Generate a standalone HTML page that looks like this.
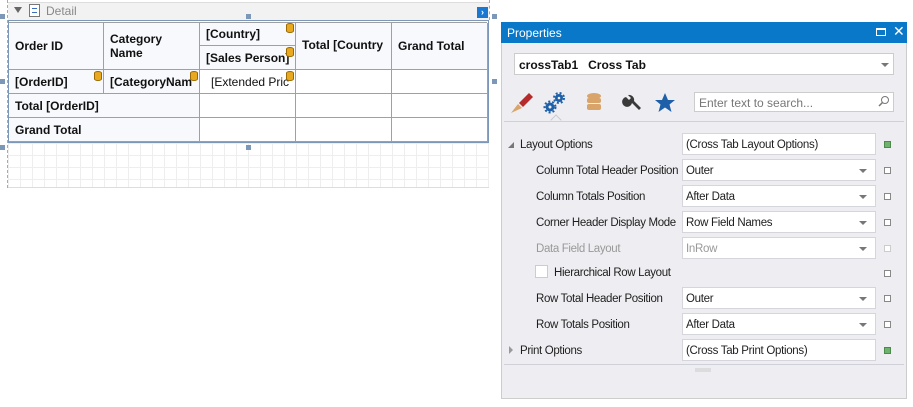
<!DOCTYPE html><html><head><style>
*{box-sizing:border-box;margin:0;padding:0}
body{width:913px;height:407px;background:#fff;font-family:"Liberation Sans",sans-serif;position:relative;overflow:hidden}
.a{position:absolute}
.grid{left:8px;top:143px;width:481px;height:45px;background-image:linear-gradient(#eeeeee 1px,transparent 1px),linear-gradient(90deg,#eeeeee 1px,transparent 1px);background-size:12px 12px;border-bottom:1px solid #ddd}
.c{position:absolute;border-right:1px solid #a0a0a0;border-bottom:1px solid #a0a0a0;font-size:12px;font-weight:bold;color:#111;padding-left:6px;display:flex;align-items:center}
.h{background:#f7f9fc}
.db{position:absolute;width:8px;height:10px;background:#e8a820;border:1px solid #9a6a00;border-radius:4px/2px}
.hd{position:absolute;width:5px;height:5px;background:#7d97b8}
.lbl{position:absolute;left:536px;font-size:11.5px;letter-spacing:-0.35px;color:#1e1e1e;white-space:nowrap;margin-top:2px}
.val{position:absolute;left:682px;width:194px;height:22px;background:#fff;border:1px solid #d5d5dc;font-size:11.5px;letter-spacing:-0.3px;color:#1e1e1e;padding:5px 3px 0}
.dd::after{content:"";position:absolute;right:8px;top:9px;border:4px solid transparent;border-top:4px solid #777;border-bottom:0}
.sq{position:absolute;left:884px;width:7px;height:7px;border:1px solid #888;background:#fff}
.sg{background:#6db36d;border-color:#4b8a4b}
</style></head><body>
<div class="a" style="left:8px;top:2px;width:481px;height:18px;background:#f2f2f2;border-top:1px solid #ddd"></div>
<div class="a" style="left:7px;top:0;width:0;height:188px;border-left:1px dashed #aaa"></div>
<div class="a" style="left:489px;top:0;width:0;height:20px;border-left:1px dashed #aaa"></div>
<div class="a" style="left:14px;top:7px;border:4px solid transparent;border-top:6px solid #666;border-bottom:0"></div>
<div class="a" style="left:29px;top:4px;width:11px;height:13px;border:1px solid #777;background:#fff"><div style="margin:3px 2px;height:5px;border-top:1px solid #3a6fc0;border-bottom:1px solid #3a6fc0"></div></div>
<div class="a" style="left:46px;top:4px;font-size:12px;color:#888">Detail</div>
<div class="a" style="left:477px;top:7px;width:11px;height:11px;background:#1a78d0;color:#fff;font-size:9px;line-height:11px;text-align:center;font-weight:bold">›</div>
<div class="a grid"></div>
<div class="a" style="left:8px;top:20px;width:481px;height:123px;border:1px solid #7d97b8;background:#fff"></div>
<div class="a" style="left:9px;top:22px;width:478px;height:119px;border-left:1px solid #a0a0a0;border-top:1px solid #a0a0a0"></div>
<div class="c h" style="left:9px;top:23px;width:95px;height:47px">Order ID</div>
<div class="c h" style="left:104px;top:23px;width:96px;height:47px">Category<br>Name</div>
<div class="c h" style="left:200px;top:23px;width:96px;height:23px">[Country]</div>
<div class="c h" style="left:200px;top:46px;width:96px;height:24px">[Sales Person]</div>
<div class="c h" style="left:296px;top:23px;width:96px;height:47px;align-items:flex-start;padding-top:15px">Total [Country</div>
<div class="c h" style="left:392px;top:23px;width:96px;height:47px">Grand Total</div>
<div class="c h" style="left:9px;top:70px;width:95px;height:24px">[OrderID]</div>
<div class="c h" style="left:104px;top:70px;width:96px;height:24px;overflow:hidden;white-space:nowrap">[CategoryNam</div>
<div class="c" style="left:200px;top:70px;width:96px;height:24px;font-weight:normal;padding-left:11px;overflow:hidden;white-space:nowrap">[Extended Pric</div>
<div class="c" style="left:296px;top:70px;width:96px;height:24px"></div>
<div class="c" style="left:392px;top:70px;width:96px;height:24px"></div>
<div class="c h" style="left:9px;top:94px;width:191px;height:24px">Total [OrderID]</div>
<div class="c" style="left:200px;top:94px;width:96px;height:24px"></div>
<div class="c" style="left:296px;top:94px;width:96px;height:24px"></div>
<div class="c" style="left:392px;top:94px;width:96px;height:24px"></div>
<div class="c h" style="left:9px;top:118px;width:191px;height:24px">Grand Total</div>
<div class="c" style="left:200px;top:118px;width:96px;height:24px"></div>
<div class="c" style="left:296px;top:118px;width:96px;height:24px"></div>
<div class="c" style="left:392px;top:118px;width:96px;height:24px"></div>
<div class="db" style="left:286px;top:23px"></div>
<div class="db" style="left:286px;top:47px"></div>
<div class="db" style="left:94px;top:71px"></div>
<div class="db" style="left:190px;top:71px"></div>
<div class="db" style="left:286px;top:71px"></div>
<div class="hd" style="left:0;top:14px"></div><div class="hd" style="left:246px;top:14px"></div><div class="hd" style="left:492px;top:14px"></div>
<div class="hd" style="left:0;top:79px"></div><div class="hd" style="left:492px;top:79px"></div>
<div class="hd" style="left:0;top:145px"></div><div class="hd" style="left:246px;top:145px"></div>
<!-- properties panel -->
<div class="a" style="left:501px;top:22px;width:406px;height:377px;background:#eeeef2;border:1px solid #ccc"></div>
<div class="a" style="left:501px;top:22px;width:406px;height:21px;background:#0a78c8;color:#fff;font-size:12px;padding:4px 6px">Properties</div>
<div class="a" style="left:876px;top:28px;width:10px;height:8px;border:1px solid #fff;border-top-width:2px"></div>
<div class="a" style="left:893px;top:23px;color:#fff;font-size:14px">✕</div>
<div class="a" style="left:514px;top:53px;width:380px;height:22px;background:#fff;border:1px solid #ccc;font-size:12px;font-weight:bold;padding:4px 4px;color:#111">crossTab1&nbsp;&nbsp;&nbsp;Cross Tab</div>
<div class="a" style="left:881px;top:63px;border:4px solid transparent;border-top:4px solid #777;border-bottom:0"></div>
<svg class="a" style="left:508px;top:89px" width="180" height="28">
<path d="M3 24 L10 15 L14 19 Z" fill="#d9a46a"/><path d="M11 14 L21 4 L25 8 L15 18 Z" fill="#b52b2b"/>
<g fill="#1d5fa8"><circle cx="42" cy="18" r="4.5"/><circle cx="51" cy="9" r="4"/></g>
<g fill="none" stroke="#1d5fa8" stroke-width="2" stroke-dasharray="2 2"><circle cx="42" cy="18" r="5.5"/><circle cx="51" cy="9" r="5"/></g>
<circle cx="42" cy="18" r="1.5" fill="#eeeef2"/><circle cx="51" cy="9" r="1.3" fill="#eeeef2"/>
<g fill="#d9a46a"><ellipse cx="86" cy="7" rx="7" ry="3"/><rect x="79" y="9" width="14" height="5" rx="2"/><rect x="79" y="15" width="14" height="6" rx="2"/></g>
<path d="M118 8 a5 5 0 1 0 6 6 L131 21 L133 19 L126 12 a5 5 0 0 0-6-6 l3 3-2 2z" fill="#3a3a3a"/>
<path d="M157 4 L160 11 L167 11 L161.5 15.5 L163.5 23 L157 18.5 L150.5 23 L152.5 15.5 L147 11 L154 11 Z" fill="#1d5fa8"/>
</svg>
<div class="a" style="left:552px;top:116px;width:8px;height:8px;background:#eeeef2;border-left:1px solid #c8c8d0;border-top:1px solid #c8c8d0;transform:rotate(45deg)"></div>
<div class="a" style="left:694px;top:92px;width:200px;height:20px;background:#fff;border:1px solid #ccc;font-size:12px;color:#777;padding:3px 4px">Enter text to search...</div>
<svg class="a" style="left:878px;top:95px" width="12" height="12"><circle cx="7" cy="5" r="3.5" fill="none" stroke="#777"/><path d="M4.5 7.5 L1 11" stroke="#777" stroke-width="1.5"/></svg>
<div class="a" style="left:504px;top:121px;width:400px;border-top:1px solid #d0d0d8"></div>
<svg class="a" style="left:508px;top:141px" width="8" height="8"><path d="M6 1 L6 7 L0 7 Z" fill="#777"/></svg>
<div class="lbl" style="left:520px;top:137px">Layout Options</div>
<div class="val" style="top:133px">(Cross Tab Layout Options)</div><div class="sq sg" style="top:141px"></div>
<div class="lbl" style="top:163px">Column Total Header Position</div><div class="val dd" style="top:159px">Outer</div><div class="sq" style="top:167px"></div>
<div class="lbl" style="top:189px">Column Totals Position</div><div class="val dd" style="top:185px">After Data</div><div class="sq" style="top:193px"></div>
<div class="lbl" style="top:215px">Corner Header Display Mode</div><div class="val dd" style="top:211px">Row Field Names</div><div class="sq" style="top:219px"></div>
<div class="lbl" style="top:241px;color:#999">Data Field Layout</div><div class="val dd" style="top:237px;color:#999">InRow</div><div class="sq" style="top:245px;border-color:#ccc"></div>
<div class="a" style="left:535px;top:265px;width:13px;height:13px;background:#fff;border:1px solid #ccc"></div>
<div class="lbl" style="left:554px;top:265px">Hierarchical Row Layout</div><div class="sq" style="top:270px"></div>
<div class="lbl" style="top:291px">Row Total Header Position</div><div class="val dd" style="top:287px">Outer</div><div class="sq" style="top:295px"></div>
<div class="lbl" style="top:317px">Row Totals Position</div><div class="val dd" style="top:313px">After Data</div><div class="sq" style="top:321px"></div>
<div class="a" style="left:509px;top:346px;border:4px solid transparent;border-left:4px solid #999;border-right:0"></div>
<div class="lbl" style="left:520px;top:343px">Print Options</div>
<div class="val" style="top:339px">(Cross Tab Print Options)</div><div class="sq sg" style="top:347px"></div>
<div class="a" style="left:504px;top:364px;width:400px;border-top:1px solid #d0d0d8"></div>
<div class="a" style="left:695px;top:368px;width:16px;height:4px;background-image:radial-gradient(#aaa 0.6px,transparent 0.8px);background-size:2px 2px"></div>
</body></html>
